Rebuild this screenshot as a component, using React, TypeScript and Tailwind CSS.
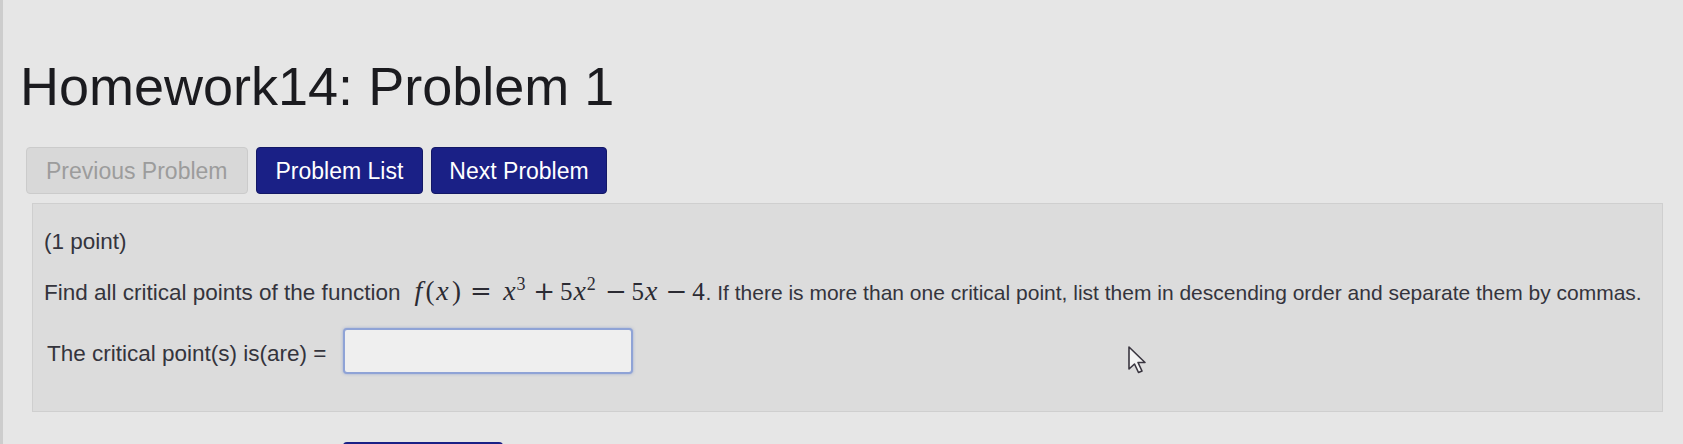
import React from 'react';

// one glyph of the formula, centred in a fixed slot so spacing follows the TeX layout
function G({ w, ml = 0, kind, children }: { w: number; ml?: number; kind: 'var' | 'num' | 'op' | 'sup' | 'paren'; children: React.ReactNode }) {
  const cls =
    kind === 'var'
      ? "italic font-['Liberation_Serif',serif] text-[28px]"
      : kind === 'num'
      ? "font-['Liberation_Serif',serif] text-[25px]"
      : kind === 'op'
      ? "font-['DejaVu_Serif',serif] text-[26px]"
      : kind === 'sup'
      ? "font-['Liberation_Serif',serif] text-[18px] relative -top-[10px]"
      : "font-['Liberation_Serif',serif] text-[27px]";
  return (
    <span className={`inline-flex justify-center leading-none ${cls}`} style={{ width: w, marginLeft: ml }}>
      {children}
    </span>
  );
}

function Formula() {
  return (
    <span className="inline-flex items-baseline text-[#2b2b33] ml-[11px]">
      <G kind="var" w={14}>f</G>
      <G kind="paren" w={8} ml={0.5}>(</G>
      <G kind="var" w={16} ml={0.5}>x</G>
      <G kind="paren" w={8} ml={2}>)</G>
      <G kind="op" w={20} ml={10.5}>=</G>
      <G kind="var" w={16} ml={10.5}>x</G>
      <G kind="sup" w={10} ml={-1.5}>3</G>
      <G kind="op" w={20} ml={8.2}>+</G>
      <G kind="num" w={10} ml={7.2}>5</G>
      <G kind="var" w={16} ml={0.5}>x</G>
      <G kind="sup" w={10} ml={-1.5}>2</G>
      <G kind="op" w={20} ml={9.7}>−</G>
      <G kind="num" w={10} ml={6.7}>5</G>
      <G kind="var" w={16} ml={0.5}>x</G>
      <G kind="op" w={20} ml={7.2}>−</G>
      <G kind="num" w={10} ml={7.2}>4</G>
    </span>
  );
}

function Cursor() {
  return (
    <svg width="20" height="30" viewBox="0 0 20 30" className="absolute left-[1094px] top-[141px]">
      <path
        d="M2 2 L2 24 L7.5 19 L11.5 27.5 L15 26 L11 17.5 L18 17.5 Z"
        fill="#f4f4f4"
        stroke="#3a3640"
        strokeWidth="1.6"
        strokeLinejoin="round"
      />
    </svg>
  );
}

export default function App() {
  return (
    <div className="min-h-screen bg-[#e6e6e6] border-l-[3px] border-[#cdcdcd] font-['Liberation_Sans',Arial,sans-serif] text-[#34343c] overflow-hidden">
      <div className="pt-[57px]">
        <h1 className="ml-[17px] text-[54px] leading-[1.1] text-[#1b1b1f]">Homework14: Problem 1</h1>

        <div className="ml-[23px] mt-[31px] flex gap-[8px]">
          <button
            disabled
            className="h-[47px] px-[19px] rounded-[4px] bg-[#d8d8d8] border border-[#cbcbcb] text-[23px] text-[#9c9c9c]"
          >
            Previous Problem
          </button>
          <button className="h-[47px] px-[19px] rounded-[4px] bg-[#1a2086] border border-[#131866] text-[23px] text-white">
            Problem List
          </button>
          <button className="h-[47px] px-[17px] rounded-[4px] bg-[#1a2086] border border-[#131866] text-[23px] text-white">
            Next Problem
          </button>
        </div>

        <div className="relative ml-[29px] mr-[20px] mt-[9px] bg-[#dcdcdc] border border-[#cfcfcf] pl-[11px] pt-[22px] pb-[37px] text-[22.5px] leading-[31px]">
          <p>(1 point)</p>
          <p className="mt-[20px] flex items-baseline whitespace-nowrap">
            <span>Find all critical points of the function</span>
            <Formula />
            <span className="ml-[2px] text-[21px]">. If there is more than one critical point, list them in descending order and separate them by commas.</span>
          </p>
          <div className="mt-[20px] flex items-center gap-[17px]">
            <span className="ml-[3px] pt-[5px]">The critical point(s) is(are) =</span>
            <input
              type="text"
              className="w-[290px] h-[46px] rounded-[4px] bg-[#efefef] border-2 border-[#8fa3d6] shadow-[0_0_3px_rgba(90,120,200,0.5)] outline-none"
            />
          </div>
          <Cursor />
        </div>

        <div className="ml-[340px] mt-[30px] w-[160px] h-[40px] rounded-[4px] bg-[#1a2086]" />
      </div>
    </div>
  );
}
